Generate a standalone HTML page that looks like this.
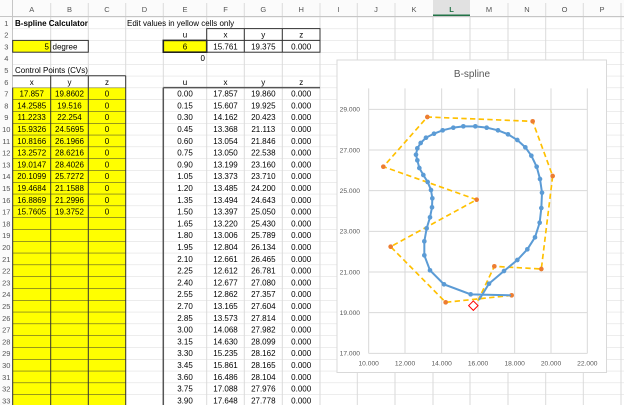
<!DOCTYPE html>
<html><head><meta charset="utf-8"><style>
html,body{margin:0;padding:0;background:#fff;}
svg{display:block;font-family:"Liberation Sans",sans-serif;}
</style></head><body>
<svg width="624" height="405" viewBox="0 0 624 405" xmlns="http://www.w3.org/2000/svg">
<defs>
<pattern id="hg" x="0" y="16.8" width="624" height="11.8" patternUnits="userSpaceOnUse"><line x1="0" y1="0" x2="624" y2="0" stroke="#dadada" stroke-width="1"/></pattern>
<pattern id="hb" x="0" y="16.8" width="624" height="11.8" patternUnits="userSpaceOnUse"><line x1="0" y1="0" x2="624" y2="0" stroke="#333" stroke-width="1"/></pattern>
</defs>
<rect width="624" height="405" fill="#fff"/>
<rect x="12.7" y="16.8" width="612" height="390" fill="url(#hg)"/>
<g stroke="#dadada" stroke-width="1">
<line x1="50.7" y1="16.8" x2="50.7" y2="405"/><line x1="88.3" y1="16.8" x2="88.3" y2="405"/><line x1="125.7" y1="16.8" x2="125.7" y2="405"/><line x1="163.3" y1="16.8" x2="163.3" y2="405"/><line x1="206.7" y1="16.8" x2="206.7" y2="405"/><line x1="244.3" y1="16.8" x2="244.3" y2="405"/><line x1="282.3" y1="16.8" x2="282.3" y2="405"/><line x1="320" y1="16.8" x2="320" y2="405"/><line x1="357.3" y1="16.8" x2="357.3" y2="405"/><line x1="395" y1="16.8" x2="395" y2="405"/><line x1="433" y1="16.8" x2="433" y2="405"/><line x1="470" y1="16.8" x2="470" y2="405"/><line x1="508" y1="16.8" x2="508" y2="405"/><line x1="545.7" y1="16.8" x2="545.7" y2="405"/><line x1="583.3" y1="16.8" x2="583.3" y2="405"/><line x1="621" y1="16.8" x2="621" y2="405"/>
</g>
<!-- headers -->
<rect x="0" y="0" width="624" height="16.8" fill="#fbfbfb"/>
<rect x="0" y="16.8" width="12.7" height="390" fill="#fbfbfb"/>
<rect x="433" y="0" width="37" height="16" fill="#e1e1e1"/>
<line x1="433" y1="15.5" x2="470" y2="15.5" stroke="#217346" stroke-width="2"/>
<line x1="0" y1="16.5" x2="624" y2="16.5" stroke="#c6c6c6"/>
<line x1="12.5" y1="0" x2="12.5" y2="405" stroke="#c6c6c6"/>
<g stroke="#dcdcdc"><line x1="50.7" y1="3" x2="50.7" y2="16"/><line x1="88.3" y1="3" x2="88.3" y2="16"/><line x1="125.7" y1="3" x2="125.7" y2="16"/><line x1="163.3" y1="3" x2="163.3" y2="16"/><line x1="206.7" y1="3" x2="206.7" y2="16"/><line x1="244.3" y1="3" x2="244.3" y2="16"/><line x1="282.3" y1="3" x2="282.3" y2="16"/><line x1="320" y1="3" x2="320" y2="16"/><line x1="357.3" y1="3" x2="357.3" y2="16"/><line x1="395" y1="3" x2="395" y2="16"/><line x1="508" y1="3" x2="508" y2="16"/><line x1="545.7" y1="3" x2="545.7" y2="16"/><line x1="583.3" y1="3" x2="583.3" y2="16"/><line x1="621" y1="3" x2="621" y2="16"/></g>
<g font-size="7.5" fill="#555" text-anchor="middle">
<text x="31.7" y="12">A</text><text x="69.5" y="12">B</text><text x="107" y="12">C</text><text x="144.5" y="12">D</text><text x="185" y="12">E</text><text x="225.5" y="12">F</text><text x="263.3" y="12">G</text><text x="301.2" y="12">H</text><text x="338.7" y="12">I</text><text x="376" y="12">J</text><text x="414" y="12">K</text><text x="451.5" y="12" fill="#217346" font-weight="bold">L</text><text x="489" y="12">M</text><text x="527" y="12">N</text><text x="564.5" y="12">O</text><text x="602" y="12">P</text>
</g>
<g font-size="7.5" fill="#555" text-anchor="middle">
<text x="6.3" y="25.8">1</text><text x="6.3" y="37.6">2</text><text x="6.3" y="49.4">3</text><text x="6.3" y="61.2">4</text><text x="6.3" y="73">5</text><text x="6.3" y="84.8">6</text><text x="6.3" y="96.6">7</text><text x="6.3" y="108.4">8</text><text x="6.3" y="120.2">9</text><text x="6.3" y="132">10</text><text x="6.3" y="143.8">11</text><text x="6.3" y="155.6">12</text><text x="6.3" y="167.4">13</text><text x="6.3" y="179.2">14</text><text x="6.3" y="191">15</text><text x="6.3" y="202.8">16</text><text x="6.3" y="214.6">17</text><text x="6.3" y="226.4">18</text><text x="6.3" y="238.2">19</text><text x="6.3" y="250">20</text><text x="6.3" y="261.8">21</text><text x="6.3" y="273.6">22</text><text x="6.3" y="285.4">23</text><text x="6.3" y="297.2">24</text><text x="6.3" y="309">25</text><text x="6.3" y="320.8">26</text><text x="6.3" y="332.6">27</text><text x="6.3" y="344.4">28</text><text x="6.3" y="356.2">29</text><text x="6.3" y="368">30</text><text x="6.3" y="379.8">31</text><text x="6.3" y="391.6">32</text><text x="6.3" y="403.4">33</text>
</g>
<!-- yellow blocks -->
<rect x="12.7" y="87.6" width="113" height="320" fill="#ffff00"/>
<rect x="12.7" y="87.6" width="113" height="320" fill="url(#hb)"/>
<g stroke="#333" stroke-width="1">
<line x1="12.7" y1="87.6" x2="12.7" y2="405"/><line x1="50.7" y1="75.8" x2="50.7" y2="405"/><line x1="88.3" y1="75.8" x2="88.3" y2="405"/><line x1="125.7" y1="75.8" x2="125.7" y2="405"/>
<line x1="12.7" y1="75.8" x2="125.7" y2="75.8"/>
</g>
<rect x="12.7" y="40.4" width="38" height="11.8" fill="#ffff00"/>
<rect x="12.7" y="40.4" width="75.6" height="11.8" fill="none" stroke="#333"/>
<line x1="50.7" y1="40.4" x2="50.7" y2="52.2" stroke="#333"/>
<rect x="163.3" y="40.4" width="43.4" height="11.8" fill="#ffff00" stroke="#222" stroke-width="1.6"/>
<rect x="206.7" y="28.6" width="113.3" height="23.6" fill="none" stroke="#333"/>
<g stroke="#333"><line x1="206.7" y1="40.4" x2="320" y2="40.4"/><line x1="244.3" y1="28.6" x2="244.3" y2="52.2"/><line x1="282.3" y1="28.6" x2="282.3" y2="52.2"/></g>
<line x1="163.3" y1="87.6" x2="320" y2="87.6" stroke="#555" stroke-width="1.5"/>
<line x1="163.3" y1="87.6" x2="163.3" y2="405" stroke="#555" stroke-width="1.5"/>
<!-- texts -->
<g font-size="8" fill="#000">
<text x="15" y="25.8" font-weight="bold">B-spline Calculator</text>
<text x="127" y="25.8">Edit values in yellow cells only</text>
<text x="49" y="49.4" text-anchor="end">5</text>
<text x="52.5" y="49.4">degree</text>
<text x="205" y="61.2" text-anchor="end">0</text>
<text x="15" y="73">Control Points (CVs)</text>
</g>
<g font-size="8" fill="#000" text-anchor="middle">
<text x="185" y="37.6">u</text><text x="225.5" y="37.6">x</text><text x="263.3" y="37.6">y</text><text x="301.2" y="37.6">z</text>
<text x="185" y="49.4">6</text><text x="225.5" y="49.4">15.761</text><text x="263.3" y="49.4">19.375</text><text x="301.2" y="49.4">0.000</text>
<text x="31.7" y="84.8">x</text><text x="69.5" y="84.8">y</text><text x="107" y="84.8">z</text>
<text x="185" y="84.8">u</text><text x="225.5" y="84.8">x</text><text x="263.3" y="84.8">y</text><text x="301.2" y="84.8">z</text>
<text><tspan x="31.7" y="96.6">17.857</tspan><tspan x="31.7" y="108.4">14.2585</tspan><tspan x="31.7" y="120.2">11.2233</tspan><tspan x="31.7" y="132">15.9326</tspan><tspan x="31.7" y="143.8">10.8166</tspan><tspan x="31.7" y="155.6">13.2572</tspan><tspan x="31.7" y="167.4">19.0147</tspan><tspan x="31.7" y="179.2">20.1099</tspan><tspan x="31.7" y="191">19.4684</tspan><tspan x="31.7" y="202.8">16.8869</tspan><tspan x="31.7" y="214.6">15.7605</tspan></text>
<text><tspan x="69.5" y="96.6">19.8602</tspan><tspan x="69.5" y="108.4">19.516</tspan><tspan x="69.5" y="120.2">22.254</tspan><tspan x="69.5" y="132">24.5695</tspan><tspan x="69.5" y="143.8">26.1966</tspan><tspan x="69.5" y="155.6">28.6216</tspan><tspan x="69.5" y="167.4">28.4026</tspan><tspan x="69.5" y="179.2">25.7272</tspan><tspan x="69.5" y="191">21.1588</tspan><tspan x="69.5" y="202.8">21.2996</tspan><tspan x="69.5" y="214.6">19.3752</tspan></text>
<text><tspan x="107" y="96.6">0</tspan><tspan x="107" y="108.4">0</tspan><tspan x="107" y="120.2">0</tspan><tspan x="107" y="132">0</tspan><tspan x="107" y="143.8">0</tspan><tspan x="107" y="155.6">0</tspan><tspan x="107" y="167.4">0</tspan><tspan x="107" y="179.2">0</tspan><tspan x="107" y="191">0</tspan><tspan x="107" y="202.8">0</tspan><tspan x="107" y="214.6">0</tspan></text>
<text><tspan x="185" y="96.6">0.00</tspan><tspan x="185" y="108.4">0.15</tspan><tspan x="185" y="120.2">0.30</tspan><tspan x="185" y="132">0.45</tspan><tspan x="185" y="143.8">0.60</tspan><tspan x="185" y="155.6">0.75</tspan><tspan x="185" y="167.4">0.90</tspan><tspan x="185" y="179.2">1.05</tspan><tspan x="185" y="191">1.20</tspan><tspan x="185" y="202.8">1.35</tspan><tspan x="185" y="214.6">1.50</tspan><tspan x="185" y="226.4">1.65</tspan><tspan x="185" y="238.2">1.80</tspan><tspan x="185" y="250">1.95</tspan><tspan x="185" y="261.8">2.10</tspan><tspan x="185" y="273.6">2.25</tspan><tspan x="185" y="285.4">2.40</tspan><tspan x="185" y="297.2">2.55</tspan><tspan x="185" y="309">2.70</tspan><tspan x="185" y="320.8">2.85</tspan><tspan x="185" y="332.6">3.00</tspan><tspan x="185" y="344.4">3.15</tspan><tspan x="185" y="356.2">3.30</tspan><tspan x="185" y="368">3.45</tspan><tspan x="185" y="379.8">3.60</tspan><tspan x="185" y="391.6">3.75</tspan><tspan x="185" y="403.4">3.90</tspan></text>
<text><tspan x="225.5" y="96.6">17.857</tspan><tspan x="225.5" y="108.4">15.607</tspan><tspan x="225.5" y="120.2">14.162</tspan><tspan x="225.5" y="132">13.368</tspan><tspan x="225.5" y="143.8">13.054</tspan><tspan x="225.5" y="155.6">13.050</tspan><tspan x="225.5" y="167.4">13.199</tspan><tspan x="225.5" y="179.2">13.373</tspan><tspan x="225.5" y="191">13.485</tspan><tspan x="225.5" y="202.8">13.494</tspan><tspan x="225.5" y="214.6">13.397</tspan><tspan x="225.5" y="226.4">13.220</tspan><tspan x="225.5" y="238.2">13.006</tspan><tspan x="225.5" y="250">12.804</tspan><tspan x="225.5" y="261.8">12.661</tspan><tspan x="225.5" y="273.6">12.612</tspan><tspan x="225.5" y="285.4">12.677</tspan><tspan x="225.5" y="297.2">12.862</tspan><tspan x="225.5" y="309">13.165</tspan><tspan x="225.5" y="320.8">13.573</tspan><tspan x="225.5" y="332.6">14.068</tspan><tspan x="225.5" y="344.4">14.630</tspan><tspan x="225.5" y="356.2">15.235</tspan><tspan x="225.5" y="368">15.861</tspan><tspan x="225.5" y="379.8">16.486</tspan><tspan x="225.5" y="391.6">17.088</tspan><tspan x="225.5" y="403.4">17.648</tspan></text>
<text><tspan x="263.3" y="96.6">19.860</tspan><tspan x="263.3" y="108.4">19.925</tspan><tspan x="263.3" y="120.2">20.423</tspan><tspan x="263.3" y="132">21.113</tspan><tspan x="263.3" y="143.8">21.846</tspan><tspan x="263.3" y="155.6">22.538</tspan><tspan x="263.3" y="167.4">23.160</tspan><tspan x="263.3" y="179.2">23.710</tspan><tspan x="263.3" y="191">24.200</tspan><tspan x="263.3" y="202.8">24.643</tspan><tspan x="263.3" y="214.6">25.050</tspan><tspan x="263.3" y="226.4">25.430</tspan><tspan x="263.3" y="238.2">25.789</tspan><tspan x="263.3" y="250">26.134</tspan><tspan x="263.3" y="261.8">26.465</tspan><tspan x="263.3" y="273.6">26.781</tspan><tspan x="263.3" y="285.4">27.080</tspan><tspan x="263.3" y="297.2">27.357</tspan><tspan x="263.3" y="309">27.604</tspan><tspan x="263.3" y="320.8">27.814</tspan><tspan x="263.3" y="332.6">27.982</tspan><tspan x="263.3" y="344.4">28.099</tspan><tspan x="263.3" y="356.2">28.162</tspan><tspan x="263.3" y="368">28.165</tspan><tspan x="263.3" y="379.8">28.104</tspan><tspan x="263.3" y="391.6">27.976</tspan><tspan x="263.3" y="403.4">27.778</tspan></text>
<text><tspan x="301.2" y="96.6">0.000</tspan><tspan x="301.2" y="108.4">0.000</tspan><tspan x="301.2" y="120.2">0.000</tspan><tspan x="301.2" y="132">0.000</tspan><tspan x="301.2" y="143.8">0.000</tspan><tspan x="301.2" y="155.6">0.000</tspan><tspan x="301.2" y="167.4">0.000</tspan><tspan x="301.2" y="179.2">0.000</tspan><tspan x="301.2" y="191">0.000</tspan><tspan x="301.2" y="202.8">0.000</tspan><tspan x="301.2" y="214.6">0.000</tspan><tspan x="301.2" y="226.4">0.000</tspan><tspan x="301.2" y="238.2">0.000</tspan><tspan x="301.2" y="250">0.000</tspan><tspan x="301.2" y="261.8">0.000</tspan><tspan x="301.2" y="273.6">0.000</tspan><tspan x="301.2" y="285.4">0.000</tspan><tspan x="301.2" y="297.2">0.000</tspan><tspan x="301.2" y="309">0.000</tspan><tspan x="301.2" y="320.8">0.000</tspan><tspan x="301.2" y="332.6">0.000</tspan><tspan x="301.2" y="344.4">0.000</tspan><tspan x="301.2" y="356.2">0.000</tspan><tspan x="301.2" y="368">0.000</tspan><tspan x="301.2" y="379.8">0.000</tspan><tspan x="301.2" y="391.6">0.000</tspan><tspan x="301.2" y="403.4">0.000</tspan></text>
</g>
<!-- chart -->
<rect x="337" y="60" width="269.5" height="312.5" fill="#fff" stroke="#d9d9d9"/>
<text x="472" y="77" font-size="10" fill="#595959" text-anchor="middle">B-spline</text>
<g transform="translate(330,55) scale(0.33333)">
<g stroke="#d9d9d9" stroke-width="3">
<line x1="116" y1="100" x2="116" y2="895"/><line x1="225" y1="100" x2="225" y2="895"/><line x1="335" y1="100" x2="335" y2="895"/><line x1="444" y1="100" x2="444" y2="895"/><line x1="554" y1="100" x2="554" y2="895"/><line x1="663" y1="100" x2="663" y2="895"/><line x1="772" y1="100" x2="772" y2="895"/>
<line x1="116" y1="163" x2="772" y2="163"/><line x1="116" y1="285" x2="772" y2="285"/><line x1="116" y1="407" x2="772" y2="407"/><line x1="116" y1="529" x2="772" y2="529"/><line x1="116" y1="651" x2="772" y2="651"/><line x1="116" y1="773" x2="772" y2="773"/><line x1="116" y1="895" x2="772" y2="895"/>
</g>
<g font-size="20" fill="#595959" text-anchor="end">
<text x="90" y="170">29.000</text><text x="90" y="292">27.000</text><text x="90" y="414">25.000</text><text x="90" y="536">23.000</text><text x="90" y="658">21.000</text><text x="90" y="780">19.000</text><text x="90" y="902">17.000</text>
</g>
<g font-size="20" fill="#595959" text-anchor="middle">
<text x="116" y="932">10.000</text><text x="225" y="932">12.000</text><text x="335" y="932">14.000</text><text x="444" y="932">16.000</text><text x="554" y="932">18.000</text><text x="663" y="932">20.000</text><text x="772" y="932">22.000</text>
</g>
<polyline fill="none" stroke="#ffc000" stroke-width="5" stroke-dasharray="16 10" points="545,721 347,742 182,575 440,434 160,335 292,186 608,199 668,363 634,642 493,634 440,745"/>
<g fill="#ed7d31"><circle cx="545" cy="721" r="7"/><circle cx="347" cy="742" r="7"/><circle cx="182" cy="575" r="7"/><circle cx="440" cy="434" r="7"/><circle cx="160" cy="335" r="7"/><circle cx="292" cy="186" r="7"/><circle cx="608" cy="199" r="7"/><circle cx="668" cy="363" r="7"/><circle cx="634" cy="642" r="7"/><circle cx="493" cy="634" r="7"/></g>
<polyline fill="none" stroke="#5b9bd5" stroke-width="6" points="543,721 422,718 342,688 300,646 283,601 283,559 290,520 300,487 306,457 307,430 303,405 293,381 280,360 268,339 262,316 258,299 262,280 272,264 288,248 312,236 338,226 370,218 400,214 436,214 470,218 504,226 534,238 562,255 586,277 604,302 620,335 630,372 636,413 634,459 629,503 615,547 592,583 562,615 522,648 477,686 447,735"/>
<g fill="#5b9bd5"><circle cx="422" cy="718" r="7"/><circle cx="342" cy="688" r="7"/><circle cx="300" cy="646" r="7"/><circle cx="283" cy="601" r="7"/><circle cx="283" cy="559" r="7"/><circle cx="290" cy="520" r="7"/><circle cx="300" cy="487" r="7"/><circle cx="306" cy="457" r="7"/><circle cx="307" cy="430" r="7"/><circle cx="303" cy="405" r="7"/><circle cx="293" cy="381" r="7"/><circle cx="280" cy="360" r="7"/><circle cx="268" cy="339" r="7"/><circle cx="262" cy="316" r="7"/><circle cx="258" cy="299" r="7"/><circle cx="262" cy="280" r="7"/><circle cx="272" cy="264" r="7"/><circle cx="288" cy="248" r="7"/><circle cx="312" cy="236" r="7"/><circle cx="338" cy="226" r="7"/><circle cx="370" cy="218" r="7"/><circle cx="400" cy="214" r="7"/><circle cx="436" cy="214" r="7"/><circle cx="470" cy="218" r="7"/><circle cx="504" cy="226" r="7"/><circle cx="534" cy="238" r="7"/><circle cx="562" cy="255" r="7"/><circle cx="586" cy="277" r="7"/><circle cx="604" cy="302" r="7"/><circle cx="620" cy="335" r="7"/><circle cx="630" cy="372" r="7"/><circle cx="636" cy="413" r="7"/><circle cx="634" cy="459" r="7"/><circle cx="629" cy="503" r="7"/><circle cx="615" cy="547" r="7"/><circle cx="592" cy="583" r="7"/><circle cx="562" cy="615" r="7"/><circle cx="522" cy="648" r="7"/><circle cx="477" cy="686" r="7"/></g>
<rect x="420" y="742" width="20" height="20" fill="#fff" stroke="#ff0000" stroke-width="3" transform="rotate(45 430 752)"/>
</g>
</svg>
</body></html>
